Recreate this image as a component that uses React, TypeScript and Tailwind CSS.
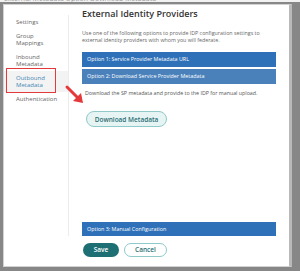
import React from "react";

const navItems = ["Settings", "Group Mappings", "Inbound Metadata", "Outbound Metadata", "Authentication"];

const font = { fontFamily: '"Open Sans", "Liberation Sans", sans-serif' };

export default function App() {
  return (
    <div className="relative w-[300px] h-[271px] overflow-hidden bg-white" style={font}>
      {/* clipped caption above the frame */}
      <div className="h-[2px] overflow-hidden bg-[#f2f2f2]">
        <div className="-mt-[5px] pl-[4px] text-[7px] leading-[7px] text-[#9a9a9a] whitespace-nowrap">
          External Metadata Option Download Metadata
        </div>
      </div>

      <div className="h-[269px] bg-[#878787] pt-[2px] pl-[3px]">
        <div className="w-[289px] h-[263px] bg-white border-t border-l border-b border-[#d2d2d2] border-r-[3px] border-r-[#b9b9b9] flex flex-col">
          <div className="flex h-[231px]">
            {/* sidebar */}
            <div className="relative w-[65px] mt-[10px] mb-0 border-r border-[#ececec] shrink-0">
              {navItems.map((item) => {
                const active = item === "Outbound Metadata";
                const words = item.split(" ");
                return (
                  <div
                    key={item}
                    className={
                      active
                        ? "py-[3.5px] pl-[12px] text-[6px] leading-[7px] text-[#3f86b3] bg-[#f3f3f3]"
                        : "py-[3.5px] pl-[12px] text-[6px] leading-[7px] text-[#666666]"
                    }
                  >
                    {words.map((w) => (
                      <div key={w}>{w}</div>
                    ))}
                  </div>
                );
              })}
              <div className="absolute left-[2px] top-[53px] w-[50px] h-[25px] border-[1.5px] border-[#e5383b]" />
            </div>

            {/* main */}
            <div className="flex-1 flex flex-col px-[13px] pt-[3px]">
              <div className="text-[9px] leading-[12px] font-semibold text-[#333333]">External Identity Providers</div>
              <div className="mt-[9.5px] text-[5.3px] leading-[7px] text-[#666666]">
                Use one of the following options to provide IDP configuration settings to
                <br />
                external identity providers with whom you will federate.
              </div>
              <div className="mt-[8.5px] h-[15px] bg-[#2f71b8] text-white text-[5.4px] leading-[15px] pl-[5px]">
                Option 1: Service Provider Metadata URL
              </div>
              <div className="mt-[2px] h-[15px] bg-[#4a81bb] text-white text-[5.4px] leading-[15px] pl-[5px]">
                Option 2: Download Service Provider Metadata
              </div>
              <div className="mt-[6px] pl-[3px] text-[5.3px] leading-[7px] text-[#555555]">
                Download the SP metadata and provide to the IDP for manual upload.
              </div>
              <div className="mt-[6.5px] pl-[4px]">
                <button className="w-[81px] h-[16px] rounded-full border border-[#8fc9c9] bg-[#e7f4f4] text-[6.5px] font-semibold text-[#2b6f73]">
                  Download Metadata
                </button>
              </div>
              <div className="mt-auto h-[14px] bg-[#2f71b8] text-white text-[5.4px] leading-[14px] pl-[5px]">
                Option 3: Manual Configuration
              </div>
            </div>
          </div>

          {/* footer */}
          <div className="flex gap-[5px] pt-[7px] pl-[79px]">
            <button className="w-[36px] h-[14px] rounded-full bg-[#1d6f74] text-white text-[6.5px] font-semibold">Save</button>
            <button className="w-[43px] h-[14px] rounded-full border border-[#8fc9c9] bg-white text-[#2b6f73] text-[6.5px] font-semibold">Cancel</button>
          </div>
        </div>
      </div>

      {/* red annotation arrow */}
      <svg className="absolute left-[64px] top-[84px]" width="24" height="24" viewBox="0 0 24 24">
        <line x1="3" y1="3" x2="14" y2="14" stroke="#e5383b" strokeWidth="3" strokeLinecap="round" />
        <polygon points="19,19 9,17 17,9" fill="#e5383b" />
      </svg>
    </div>
  );
}
